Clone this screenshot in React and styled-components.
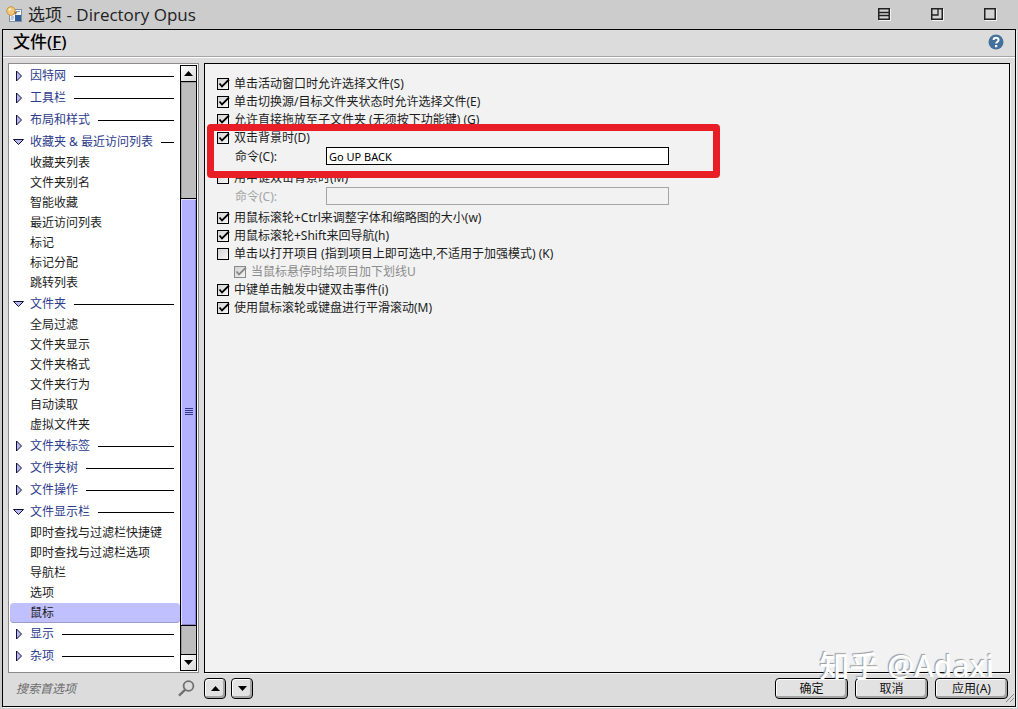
import React from "react";
import styled, { createGlobalStyle, css } from "styled-components";

const Global = createGlobalStyle`
  *, *::before, *::after { box-sizing: border-box; }
  html, body { margin: 0; background: #cccccc; }
  body { font: 12px/18px "Noto Sans", "Noto Sans CJK SC", sans-serif; color: #1c1c1c; }
  button, input { font: inherit; color: inherit; }
`;

const Window = styled.div`
  min-height: 100vh;
  display: flex;
  flex-direction: column;
  padding: 0 2px 2px;
`;

const TitleBar = styled.header`
  flex: none;
  height: 29px;
  display: flex;
  align-items: center;
  justify-content: space-between;
  padding: 0 19px 0 4px;
`;

const Title = styled.h1`
  display: flex;
  align-items: center;
  gap: 5px;
  margin: 0;
  font: 400 17px/28px "Open Sans", "Noto Sans CJK SC", sans-serif;
  color: #222;
`;

const Controls = styled.div`
  display: flex;
  gap: 40px;
`;

const PlainButton = styled.button`
  display: flex;
  padding: 0;
  border: 0;
  background: none;
`;

const Frame = styled.div`
  flex: 1;
  display: flex;
  flex-direction: column;
  border: 1px solid #000;
  background: #dcdcdc;
  box-shadow: 1px 1px 0 #f4f4f4;
`;

const MenuBar = styled.nav`
  height: 28px;
  display: flex;
  align-items: center;
  justify-content: space-between;
  padding: 0 11px 4px 10px;
  border-bottom: 1px solid #fff;
  box-shadow: inset 0 -1px 0 #a8a4a8;
`;

const MenuItem = styled.button`
  padding: 0;
  border: 0;
  background: none;
  font: 500 17px/22px "Noto Sans", "Noto Sans CJK SC", sans-serif;
  color: #000;
`;

const Body = styled.div`
  flex: 1;
  display: grid;
  grid-template-columns: 191px minmax(0, 1fr);
  grid-template-rows: 1fr 31px;
  column-gap: 5px;
  padding: 5px 5px 2px;
`;

const Sidebar = styled.aside`
  display: flex;
  padding: 1px;
  border: 1px solid #8c8a8c;
  background: #fff;
`;

const Tree = styled.ul`
  flex: 1;
  margin: 0;
  padding: 0;
  list-style: none;
`;

const Group = styled.li`
  display: flex;
  align-items: center;
  height: 22px;
  padding: 0 6px 0 2px;
  color: #2d3c8c;
  white-space: nowrap;

  &::after {
    content: "";
    flex: 1;
    height: 1px;
    margin-left: 8px;
    background: #000;
  }
`;

const Twisty = styled.svg`
  flex: none;
  width: 13px;
  height: 13px;
  margin-right: 5px;
`;

const Leaf = styled.li`
  height: 20px;
  padding-left: 20px;
  line-height: 20px;
  white-space: nowrap;
  ${(p) =>
    p.$selected &&
    css`
      background: #c1c0ff;
      border-radius: 4px;
      box-shadow: inset 0 -1px 0 #9c9ccc;
    `}
`;

const ScrollBar = styled.div`
  flex: none;
  width: 17px;
  display: flex;
  flex-direction: column;
  border: 1px solid #000;
  background: #bdbdbd;
`;

const ScrollButton = styled.button`
  flex: none;
  height: 16px;
  display: flex;
  align-items: center;
  justify-content: center;
  padding: 0;
  border: 0 solid #000;
  border-width: ${(p) => (p.$end ? "1px 0 0" : "0 0 1px")};
  background: linear-gradient(135deg, #fff, #d8d8d8);
`;

const Track = styled.div`
  flex: 1;
  display: flex;
  flex-direction: column;
  box-shadow: inset 1px 1px 0 #9a9a9a;
`;

const TrackSpace = styled.div`
  flex: ${(p) => p.$grow};
`;

const Thumb = styled.div`
  flex: 428;
  display: flex;
  align-items: center;
  justify-content: center;
  border: solid #000;
  border-width: 1px 0;
  background: #b3b2ff;
  box-shadow: inset 1px 1px 0 #dcdcff, inset -1px -1px 0 #8685cc;
`;

const Panel = styled.main`
  display: flex;
  flex-direction: column;
  padding: 11px 12px;
  border: 1px solid #000;
  background: #f2f2f2;
  box-shadow: 1px 1px 0 #f6f6f6;
`;

const Option = styled.label`
  display: flex;
  align-items: center;
  height: 18px;
  gap: 5px;
  padding-left: ${(p) => (p.$nested ? "17px" : "0")};
  color: ${(p) => (p.$muted ? "#8c8c8c" : "inherit")};
  white-space: nowrap;
`;

const Check = styled.input`
  appearance: none;
  flex: none;
  width: 12px;
  height: 12px;
  margin: 0;
  border: 1px solid #000;
  background: linear-gradient(135deg, #d2d2d2, #f6f6f6);
  &:disabled { border-color: #8a8a8a; }
`;

const CheckBox = styled.span`
  position: relative;
  display: flex;

  svg {
    position: absolute;
    top: 0;
    left: 0;
    pointer-events: none;
  }
`;

const Command = styled.label`
  display: grid;
  grid-template-columns: 91px minmax(0, 343px);
  align-items: center;
  height: 20px;
  padding-left: 18px;
  color: ${(p) => (p.$muted ? "#a4a4a4" : "inherit")};
`;

const CommandInput = styled.input`
  height: 18px;
  margin-bottom: 2px;
  padding: 0 2px;
  border: 1px solid #000;
  border-radius: 0;
  background: #fff;
  color: #000;
  font-size: 11px;
  line-height: 16px;
  &:disabled { border-color: #a6a4a8; background: #f2f2f2; }
`;

const OptionSet = styled.section`
  position: relative;
  width: fit-content;
  margin-bottom: 2px;
`;

const Highlight = styled.div`
  position: absolute;
  inset: -5px -51px -11px -10px;
  z-index: 1;
  border: 7px solid #e81d26;
  border-radius: 4px;
  pointer-events: none;
`;

const Search = styled.label`
  display: flex;
  align-items: center;
  justify-content: space-between;
  padding: 0 4px 0 8px;

  input {
    width: 140px;
    padding: 0;
    border: 0;
    background: none;
    font-style: italic;
  }
  input::placeholder { color: #6c6c6c; opacity: 1; }
`;

const Footer = styled.footer`
  position: relative;
  display: flex;
  align-items: center;
  justify-content: space-between;
  padding-right: 2px;
`;

const ButtonRow = styled.div`
  display: flex;
  gap: ${(p) => p.$gap};
`;

const PushButton = styled.button`
  width: ${(p) => p.$width};
  height: 21px;
  display: flex;
  align-items: center;
  justify-content: center;
  padding: 0;
  border: 1px solid #000;
  border-radius: 4px;
  background: #e2e2e2;
  box-shadow: inset 1px 1px 0 #fff, inset -2px -2px 0 #a4a4a4;
  color: #111;
  line-height: 18px;
`;

const Watermark = styled.div`
  position: absolute;
  right: 16px;
  bottom: 18px;
  z-index: 2;
  font: 500 30px/40px "Noto Sans", "Noto Sans CJK SC", sans-serif;
  color: #fff;
  text-shadow: -1px -1px 1px #999;
  pointer-events: none;
  white-space: nowrap;
`;

const Grip = styled.svg`
  position: absolute;
  right: -4px;
  bottom: 2px;
`;

const Arrow = ({ down }) => (
  <svg width="9" height="5" viewBox="0 0 9 5" aria-hidden="true">
    <path d={down ? "M0 0h9L4.5 5z" : "M0 5h9L4.5 0z"} fill="#000" />
  </svg>
);

const AppIcon = () => (
  <svg width="17" height="17" viewBox="0 0 17 17" aria-hidden="true">
    <rect x="3.5" y="3.5" width="12" height="12" fill="#f4f6fa" stroke="#7d8fa4" />
    <path d="M10 5.5h4M4.5 13h3M5 11h3" stroke="#8299b5" />
    <rect x="9" y="9" width="6" height="6" fill="#2c5f9a" />
    <circle cx="5" cy="5" r="4.3" fill="#f3c777" stroke="#c9944a" />
    <path d="M2.8 4.2l2-1.6" stroke="#fff3cf" strokeWidth="1.8" />
    <path d="M8 5.5l3.5 1-2.5 2.5z" fill="#8d7350" />
  </svg>
);

const GLYPHS = {
  收起: "M1 4.5h10M1 7.5h10",
  还原: "M1 7h6V1",
  最大化: "",
};

const ControlIcon = ({ d }) => (
  <svg width="13" height="13" viewBox="0 0 13 13" aria-hidden="true">
    <path d="M12.5 1v11.5H1" fill="none" stroke="#f4f4f4" />
    <rect x=".75" y=".75" width="10.5" height="10.5" fill="#d4d4d4" stroke="#222" strokeWidth="1.5" />
    <path d={d} fill="none" stroke="#222" strokeWidth="1.3" />
  </svg>
);

const HelpIcon = () => (
  <svg width="16" height="16" viewBox="0 0 16 16" aria-hidden="true">
    <circle cx="8" cy="8" r="7.5" fill="#44709c" />
    <path d="M5.6 6.1c0-3 5-3 5-.2 0 1.8-2.4 1.8-2.4 3.7" fill="none" stroke="#fff" strokeWidth="2" />
    <rect x="7" y="11" width="2.3" height="2.2" fill="#fff" />
  </svg>
);

const SearchIcon = () => (
  <svg width="17" height="17" viewBox="0 0 17 17" aria-hidden="true">
    <circle cx="10.5" cy="6" r="4.9" fill="none" stroke="#707070" strokeWidth="1.8" />
    <path d="M7.2 9.6L1 15.6" stroke="#707070" strokeWidth="2.2" />
  </svg>
);

const Tick = ({ muted }) => (
  <svg width="13" height="12" viewBox="0 0 13 12" aria-hidden="true">
    <path d="M2.5 5.5L5 8.5 12 1.5" fill="none" stroke={muted ? "#888" : "#000"} strokeWidth="1.8" />
  </svg>
);

const TREE = [
  { name: "因特网" },
  { name: "工具栏" },
  { name: "布局和样式" },
  {
    name: "收藏夹 & 最近访问列表",
    items: ["收藏夹列表", "文件夹别名", "智能收藏", "最近访问列表", "标记", "标记分配", "跳转列表"],
  },
  {
    name: "文件夹",
    items: ["全局过滤", "文件夹显示", "文件夹格式", "文件夹行为", "自动读取", "虚拟文件夹"],
  },
  { name: "文件夹标签" },
  { name: "文件夹树" },
  { name: "文件操作" },
  {
    name: "文件显示栏",
    items: ["即时查找与过滤栏快捷键", "即时查找与过滤栏选项", "导航栏", "选项", "鼠标"],
  },
  { name: "显示" },
  { name: "杂项" },
];

const CheckOption = ({ text, checked = false, disabled = false, nested = false }) => (
  <Option $muted={disabled} $nested={nested}>
    <CheckBox>
      <Check type="checkbox" defaultChecked={checked} disabled={disabled} />
      {checked && <Tick muted={disabled} />}
    </CheckBox>
    {text}
  </Option>
);

const CommandField = ({ value, disabled = false }) => (
  <Command $muted={disabled}>
    命令(C):
    <CommandInput type="text" defaultValue={value} disabled={disabled} />
  </Command>
);

export default function App() {
  return (
    <Window>
      <Global />
      <TitleBar>
        <Title>
          <AppIcon />
          选项 - Directory Opus
        </Title>
        <Controls>
          {Object.entries(GLYPHS).map(([label, d]) => (
            <PlainButton key={label} aria-label={label}>
              <ControlIcon d={d} />
            </PlainButton>
          ))}
        </Controls>
      </TitleBar>
      <Frame>
        <MenuBar>
          <MenuItem>
            文件(<u>F</u>)
          </MenuItem>
          <PlainButton aria-label="帮助">
            <HelpIcon />
          </PlainButton>
        </MenuBar>
        <Body>
          <Sidebar>
            <Tree>
              {TREE.map(({ name, items }) => (
                <React.Fragment key={name}>
                  <Group>
                    <Twisty viewBox="0 0 13 13" aria-hidden="true">
                      <path
                        d={items ? "M1.5 3.5h10l-5 5z" : "M4.5 1v10l5-5z"}
                        fill="#b8b8ee"
                        stroke="#10103c"
                      />
                    </Twisty>
                    {name}
                  </Group>
                  {items?.map((item) => (
                    <Leaf key={item} $selected={item === "鼠标"}>
                      {item}
                    </Leaf>
                  ))}
                </React.Fragment>
              ))}
            </Tree>
            <ScrollBar>
              <ScrollButton aria-label="向上滚动">
                <Arrow />
              </ScrollButton>
              <Track>
                <TrackSpace $grow={116} />
                <Thumb>
                  <svg width="8" height="8" viewBox="0 0 8 8" aria-hidden="true">
                    <path d="M0 .5h8M0 2.5h8M0 4.5h8M0 6.5h8" stroke="#34348c" />
                  </svg>
                </Thumb>
                <TrackSpace $grow={28} />
              </Track>
              <ScrollButton $end aria-label="向下滚动">
                <Arrow down />
              </ScrollButton>
            </ScrollBar>
          </Sidebar>
          <Panel>
            <CheckOption checked text="单击活动窗口时允许选择文件(S)" />
            <CheckOption checked text="单击切换源/目标文件夹状态时允许选择文件(E)" />
            <CheckOption checked text="允许直接拖放至子文件夹 (无须按下功能键) (G)" />
            <OptionSet>
              <CheckOption checked text="双击背景时(D)" />
              <CommandField value="Go UP BACK" />
              <Highlight />
            </OptionSet>
            <OptionSet>
              <CheckOption text="用中键双击背景时(M)" />
              <CommandField value="" disabled />
            </OptionSet>
            <CheckOption checked text="用鼠标滚轮+Ctrl来调整字体和缩略图的大小(w)" />
            <CheckOption checked text="用鼠标滚轮+Shift来回导航(h)" />
            <CheckOption text="单击以打开项目 (指到项目上即可选中,不适用于加强模式) (K)" />
            <CheckOption checked disabled nested text="当鼠标悬停时给项目加下划线U" />
            <CheckOption checked text="中键单击触发中键双击事件(i)" />
            <CheckOption checked text="使用鼠标滚轮或键盘进行平滑滚动(M)" />
          </Panel>
          <Search>
            <input type="text" placeholder="搜索首选项" aria-label="搜索首选项" />
            <SearchIcon />
          </Search>
          <Footer>
            <ButtonRow $gap="5px">
              <PushButton $width="22px" aria-label="上一页">
                <Arrow />
              </PushButton>
              <PushButton $width="22px" aria-label="下一页">
                <Arrow down />
              </PushButton>
            </ButtonRow>
            <ButtonRow $gap="7px">
              <PushButton $width="73px">确定</PushButton>
              <PushButton $width="73px">取消</PushButton>
              <PushButton $width="73px">应用(A)</PushButton>
            </ButtonRow>
            <Watermark>知乎 @Adaxi</Watermark>
            <Grip width="8" height="8" viewBox="0 0 8 8" aria-hidden="true">
              <path d="M0 8L8 0M4 8l4-4" stroke="#888" />
            </Grip>
          </Footer>
        </Body>
      </Frame>
    </Window>
  );
}
